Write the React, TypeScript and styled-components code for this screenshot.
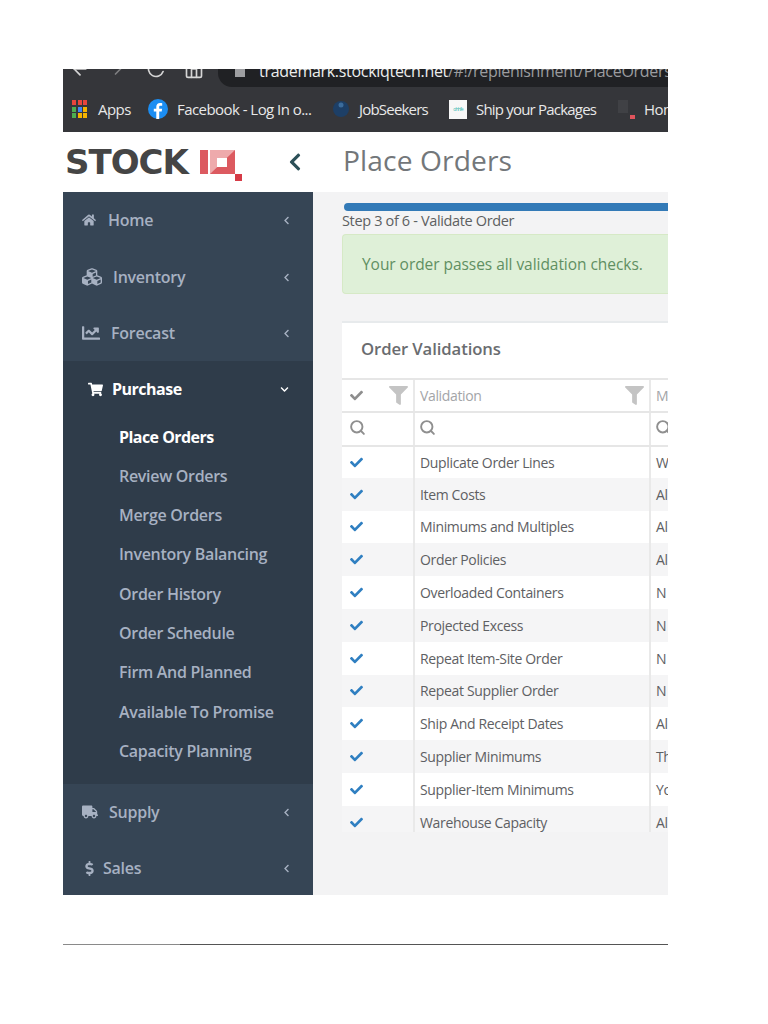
import React from "react";
import styled, { createGlobalStyle } from "styled-components";
import {
  FaHome,
  FaCubes,
  FaChartLine,
  FaShoppingCart,
  FaTruck,
  FaDollarSign,
  FaChevronLeft,
  FaChevronDown,
  FaCheck,
  FaFilter,
} from "react-icons/fa";
import { FiArrowLeft, FiChevronRight, FiRotateCw, FiHome, FiSearch } from "react-icons/fi";

const SIDEBAR_BG = "#364555";
const SIDEBAR_DARK = "#2f3c4a";
const SIDEBAR_TEXT = "#a7b1c2";

const GlobalStyle = createGlobalStyle`
  html, body {
    margin: 0;
    padding: 0;
    background: #fff;
  }
  body {
    font-family: "Open Sans", "Liberation Sans", sans-serif;
  }
`;

const Page = styled.div`
  width: 768px;
  height: 1024px;
  padding: 69px 100px 0 63px;
  box-sizing: border-box;
  overflow: hidden;
`;

const Frame = styled.div`
  width: 605px;
  overflow: hidden;
`;

const Toolbar = styled.div`
  height: 19px;
  background: #35363a;
  display: flex;
  align-items: flex-start;
  color: #d6d6d6;
  overflow: hidden;
`;

const NavIcons = styled.div`
  display: flex;
  gap: 18px;
  width: 155px;
  height: 10px;
  flex: none;
  padding-left: 7px;
  box-sizing: border-box;
  font-size: 20px;
  align-items: flex-end;
`;

const ForwardIcon = styled(FiChevronRight)`
  opacity: 0.45;
`;

const AddressBar = styled.div`
  flex: 1;
  height: 18px;
  background: #202124;
  border-radius: 0 0 0 14px;
  display: flex;
  align-items: flex-end;
  padding-left: 17px;
  font-size: 16px;
  line-height: 22px;
  white-space: nowrap;
  overflow: hidden;
`;

const Lock = styled.span`
  width: 10px;
  height: 12px;
  background: #9d9ea1;
  margin: 0 14px 10px 0;
  flex: none;
`;

const Url = styled.span`
  color: #eceded;
  letter-spacing: -0.3px;
  position: relative;
  top: -5px;
`;

const UrlRest = styled.span`
  color: #9b9c9f;
`;

const Bookmarks = styled.div`
  height: 44px;
  background: #35363a;
  display: flex;
  align-items: center;
  padding: 0 0 2px 9px;
  box-sizing: border-box;
  color: #e8e8e8;
  font-size: 15px;
  letter-spacing: -0.55px;
  white-space: nowrap;
  overflow: hidden;
`;

const Bookmark = styled.div<{ $width: number; $tight?: boolean }>`
  width: ${(p) => p.$width}px;
  flex: none;
  display: flex;
  align-items: center;
  gap: 9px;
  letter-spacing: ${(p) => (p.$tight ? "-0.8px" : "-0.55px")};

  svg {
    flex: none;
  }
`;

const AppGrid = styled.div`
  display: grid;
  grid-template-columns: repeat(3, 4px);
  grid-auto-rows: 5px;
  gap: 1.5px;
  margin-right: 2px;
`;

const AppDot = styled.span<{ $color: string }>`
  background: ${(p) => p.$color};
`;

const Header = styled.div`
  height: 60px;
  background: #fff;
  display: flex;
  align-items: center;
`;

const Brand = styled.div`
  width: 222px;
  flex: none;
  display: flex;
  align-items: center;
  padding-left: 2px;
  box-sizing: border-box;
  gap: 12px;
`;

const BrandName = styled.span`
  font-family: "DejaVu Sans", sans-serif;
  font-weight: 700;
  font-size: 34px;
  line-height: 36px;
  letter-spacing: -1px;
  color: #454545;
`;

const LogoSvg = styled.svg`
  margin-top: 7px;
  flex: none;
`;

const Collapse = styled.div`
  width: 58px;
  flex: none;
  font-size: 20px;
  color: #2c5058;
  display: flex;
  align-items: center;
`;

const PageTitle = styled.h1`
  margin: 0 0 4px;
  font-weight: 400;
  font-size: 28.2px;
  letter-spacing: 0.1px;
  color: #73777a;
`;

const Body = styled.div`
  display: flex;
  height: 703px;
`;

const Sidebar = styled.nav`
  width: 250px;
  flex: none;
  background: ${SIDEBAR_BG};
  font-weight: 600;
  font-size: 16px;
  letter-spacing: -0.25px;
  color: ${SIDEBAR_TEXT};
  overflow: hidden;

  & > :first-child {
    height: 57px;
    padding-bottom: 1px;
    box-sizing: border-box;
  }
`;

const NavRow = styled.div<{ $active?: boolean }>`
  height: 56px;
  display: flex;
  align-items: center;
  padding-left: ${(p) => (p.$active ? 25 : 19)}px;
  padding-right: ${(p) => (p.$active ? 24 : 22)}px;
  color: ${(p) => (p.$active ? "#fff" : SIDEBAR_TEXT)};
  font-weight: ${(p) => (p.$active ? 700 : 600)};
  letter-spacing: ${(p) => (p.$active ? "-0.5px" : "-0.25px")};
`;

const NavIcon = styled.span<{ $gap: number; $size: number }>`
  display: flex;
  font-size: ${(p) => p.$size}px;
  margin-right: ${(p) => p.$gap}px;
`;

const NavCaret = styled.span<{ $active?: boolean }>`
  margin-left: auto;
  display: flex;
  font-size: 9px;
  color: ${(p) => (p.$active ? "#fff" : SIDEBAR_TEXT)};
`;

const PurchaseGroup = styled.div`
  height: 423px;
  background: ${SIDEBAR_DARK};
`;

const SubList = styled.div`
  padding-top: 0.5px;
`;

const SubItem = styled.div<{ $active?: boolean }>`
  height: 39.3px;
  line-height: 39.3px;
  padding-left: 56px;
  color: ${(p) => (p.$active ? "#fff" : SIDEBAR_TEXT)};
  font-weight: ${(p) => (p.$active ? 700 : 600)};
  letter-spacing: ${(p) => (p.$active ? "-0.55px" : "-0.3px")};
`;

const Content = styled.main`
  flex: 1;
  min-width: 0;
  background: #f3f3f4;
  padding: 11px 0 0 29px;
  color: #676a6c;
  overflow: hidden;
`;

const Progress = styled.div`
  height: 8px;
  background: #337ab7;
  border-radius: 4px 0 0 4px;
  margin-left: 2px;
`;

const StepLabel = styled.div`
  font-size: 14.5px;
  line-height: 20px;
  letter-spacing: -0.35px;
  color: #5d5f61;
`;

const Alert = styled.div`
  height: 60px;
  margin-top: 3px;
  background: #dff0d8;
  border: 1px solid #d6e9c6;
  border-right: 0;
  border-radius: 4px 0 0 4px;
  box-sizing: border-box;
  padding-left: 19px;
  display: flex;
  align-items: center;
  font-size: 15.5px;
  letter-spacing: -0.05px;
  color: #5f8f62;
  white-space: nowrap;
`;

const Card = styled.section`
  margin-top: 27px;
  height: 511px;
  background: #fff;
  border-top: 2px solid #e7eaec;
  box-sizing: border-box;
  overflow: hidden;
`;

const CardTitle = styled.h2`
  margin: 0;
  height: 55px;
  padding: 0 0 4px 19px;
  box-sizing: border-box;
  display: flex;
  align-items: center;
  font-size: 16.7px;
  font-weight: 600;
  letter-spacing: -0.1px;
  color: #6a6c70;
`;

const Grid = styled.div`
  font-size: 14px;
  letter-spacing: -0.35px;
  color: #5e6063;
`;

const GridRow = styled.div<{ $height: number; $striped?: boolean; $line?: number }>`
  display: grid;
  grid-template-columns: 71px 236px 1fr;
  height: ${(p) => p.$height}px;
  box-sizing: border-box;
  background: ${(p) => (p.$striped ? "#f5f5f6" : "#fff")};
  border-top: ${(p) => (p.$line ? `${p.$line}px solid #e6e6e6` : "none")};
`;

const Cell = styled.div<{ $first?: boolean }>`
  display: flex;
  align-items: center;
  padding-left: ${(p) => (p.$first ? 8 : 5)}px;
  border-left: ${(p) => (p.$first ? "none" : "2px solid #e9e9e9")};
  white-space: nowrap;
  overflow: hidden;
`;

const HeadLabel = styled.span`
  color: #a3a5a8;
`;

const FilterIcon = styled.span`
  margin-left: auto;
  margin-right: 5px;
  display: flex;
  font-size: 19px;
  color: #c4c4c4;
`;

const CheckHead = styled.span`
  display: flex;
  font-size: 13px;
  color: #8e8e8e;
`;

const SearchIcon = styled.span`
  display: flex;
  font-size: 17px;
  margin: 0 0 3px -1px;
  color: #8f8f8f;

  svg {
    stroke-width: 2.7;
  }
`;

const RowCheck = styled.span`
  display: flex;
  font-size: 13px;
  color: #2f7fc1;
`;

const FootLine = styled.div`
  height: 1px;
  margin-top: 49px;
  width: 605px;
  background: linear-gradient(90deg, #8a8a8a 0 117px, #555 117px);
`;

const navTop = [
  { label: "Home", icon: <FaHome />, gap: 12, size: 14 },
  { label: "Inventory", icon: <FaCubes />, gap: 11, size: 20 },
  { label: "Forecast", icon: <FaChartLine />, gap: 11, size: 18 },
];

const navBottom = [
  { label: "Supply", icon: <FaTruck />, gap: 11, size: 16 },
  { label: "Sales", icon: <FaDollarSign />, gap: 6, size: 15 },
];

const subItems = [
  "Place Orders",
  "Review Orders",
  "Merge Orders",
  "Inventory Balancing",
  "Order History",
  "Order Schedule",
  "Firm And Planned",
  "Available To Promise",
  "Capacity Planning",
];

const rows = [
  ["Duplicate Order Lines", "W"],
  ["Item Costs", "Al"],
  ["Minimums and Multiples", "Al"],
  ["Order Policies", "Al"],
  ["Overloaded Containers", "N"],
  ["Projected Excess", "N"],
  ["Repeat Item-Site Order", "N"],
  ["Repeat Supplier Order", "N"],
  ["Ship And Receipt Dates", "Al"],
  ["Supplier Minimums", "Th"],
  ["Supplier-Item Minimums", "Yo"],
  ["Warehouse Capacity", "Al"],
];

const appColors = ["#e8453c", "#e8453c", "#e8453c", "#4cae50", "#4285f4", "#f4b400", "#4cae50", "#f4b400", "#f4b400"];

const FacebookIcon = () => (
  <svg width="20" height="20" viewBox="0 0 20 20">
    <circle cx="10" cy="10" r="10" fill="#1b8df2" />
    <path d="M11.2 20v-7.4h2.5l.4-2.9h-2.9V8.1c0-.9.3-1.4 1.5-1.4h1.5V4.2c-.5-.1-1.3-.2-2.2-.2-2.2 0-3.7 1.3-3.7 3.8v1.9H5.8v2.9h2.5V20z" fill="#fff" />
  </svg>
);

const LogoMark = () => (
  <LogoSvg width="42" height="31" viewBox="0 0 42 31">
    <rect x="0" y="0" width="8" height="24" fill="#dc5a60" />
    <rect x="10" y="0" width="25" height="24" fill="#dc5a60" />
    <path d="M10 0h25L10 24z" fill="#eeaaac" />
    <rect x="17" y="8" width="10" height="9" fill="#fff" />
    <rect x="35" y="24" width="7" height="7" fill="#d63b47" />
  </LogoSvg>
);

const App: React.FC = () => {
  return (
    <>
      <GlobalStyle />
      <Page>
        <Frame>
          <Toolbar>
            <NavIcons>
              <FiArrowLeft />
              <ForwardIcon />
              <FiRotateCw />
              <FiHome />
            </NavIcons>
            <AddressBar>
              <Lock />
              <Url>
                trademark.stockiqtech.net<UrlRest>/#!/replenishment/PlaceOrders</UrlRest>
              </Url>
            </AddressBar>
          </Toolbar>
          <Bookmarks>
            <Bookmark $width={76}>
              <AppGrid>
                {appColors.map((c, i) => (
                  <AppDot key={i} $color={c} />
                ))}
              </AppGrid>
              Apps
            </Bookmark>
            <Bookmark $width={184}>
              <FacebookIcon />
              Facebook - Log In o...
            </Bookmark>
            <Bookmark $width={117} $tight>
              <svg width="18" height="20" viewBox="0 0 18 20">
                <circle cx="9" cy="10" r="8" fill="#1d3f66" />
                <circle cx="9" cy="6" r="2.5" fill="#3b6c9c" />
              </svg>
              JobSeekers
            </Bookmark>
            <Bookmark $width={168} $tight>
              <svg width="18" height="19" viewBox="0 0 18 19">
                <rect width="18" height="19" fill="#f7f7f7" />
                <text x="9" y="11" fontSize="5" textAnchor="middle" fill="#35b8b0" fontFamily="Open Sans, sans-serif">
                  ohhfe
                </text>
              </svg>
              Ship your Packages
            </Bookmark>
            <Bookmark $width={80}>
              <svg width="18" height="20" viewBox="0 0 18 20">
                <rect x="1" y="1" width="10" height="13" fill="#404145" />
                <rect x="13" y="16" width="5" height="4" fill="#e0545c" />
              </svg>
              Home
            </Bookmark>
          </Bookmarks>
          <Header>
            <Brand>
              <BrandName>STOCK</BrandName>
              <LogoMark />
            </Brand>
            <Collapse>
              <FaChevronLeft />
            </Collapse>
            <PageTitle>Place Orders</PageTitle>
          </Header>
          <Body>
            <Sidebar>
              {navTop.map((n) => (
                <NavRow key={n.label}>
                  <NavIcon $gap={n.gap} $size={n.size}>
                    {n.icon}
                  </NavIcon>
                  {n.label}
                  <NavCaret>
                    <FaChevronLeft />
                  </NavCaret>
                </NavRow>
              ))}
              <PurchaseGroup>
                <NavRow $active>
                  <NavIcon $gap={9} $size={15}>
                    <FaShoppingCart />
                  </NavIcon>
                  Purchase
                  <NavCaret $active>
                    <FaChevronDown />
                  </NavCaret>
                </NavRow>
                <SubList>
                  {subItems.map((s, i) => (
                    <SubItem key={s} $active={i === 0}>
                      {s}
                    </SubItem>
                  ))}
                </SubList>
              </PurchaseGroup>
              {navBottom.map((n) => (
                <NavRow key={n.label}>
                  <NavIcon $gap={n.gap} $size={n.size}>
                    {n.icon}
                  </NavIcon>
                  {n.label}
                  <NavCaret>
                    <FaChevronLeft />
                  </NavCaret>
                </NavRow>
              ))}
            </Sidebar>
            <Content>
              <Progress />
              <StepLabel>Step 3 of 6 - Validate Order</StepLabel>
              <Alert>Your order passes all validation checks.</Alert>
              <Card>
                <CardTitle>Order Validations</CardTitle>
                <Grid>
                  <GridRow $height={33} $line={2}>
                    <Cell $first>
                      <CheckHead>
                        <FaCheck />
                      </CheckHead>
                      <FilterIcon>
                        <FaFilter />
                      </FilterIcon>
                    </Cell>
                    <Cell>
                      <HeadLabel>Validation</HeadLabel>
                      <FilterIcon>
                        <FaFilter />
                      </FilterIcon>
                    </Cell>
                    <Cell>
                      <HeadLabel>M</HeadLabel>
                    </Cell>
                  </GridRow>
                  <GridRow $height={34} $line={2}>
                    <Cell $first>
                      <SearchIcon>
                        <FiSearch />
                      </SearchIcon>
                    </Cell>
                    <Cell>
                      <SearchIcon>
                        <FiSearch />
                      </SearchIcon>
                    </Cell>
                    <Cell>
                      <SearchIcon>
                        <FiSearch />
                      </SearchIcon>
                    </Cell>
                  </GridRow>
                  {rows.map(([name, message], i) => (
                    <GridRow key={name} $height={32.8} $striped={i % 2 === 1} $line={i === 0 ? 2 : 0}>
                      <Cell $first>
                        <RowCheck>
                          <FaCheck />
                        </RowCheck>
                      </Cell>
                      <Cell>{name}</Cell>
                      <Cell>{message}</Cell>
                    </GridRow>
                  ))}
                </Grid>
              </Card>
            </Content>
          </Body>
          <FootLine />
        </Frame>
      </Page>
    </>
  );
};

export default App;
